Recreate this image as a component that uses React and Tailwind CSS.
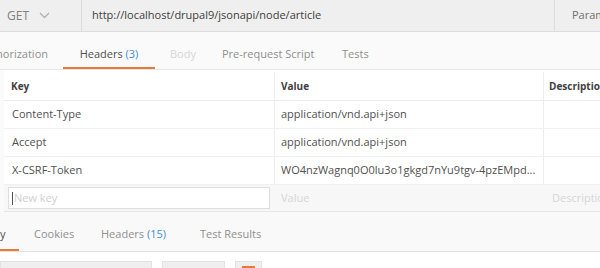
import React from 'react';

const rows = [
  { key: 'Content-Type', value: 'application/vnd.api+json' },
  { key: 'Accept', value: 'application/vnd.api+json' },
  { key: 'X-CSRF-Token', value: 'WO4nzWagnq0O0lu3o1gkgd7nYu9tgv-4pzEMpd...' },
];

const App = () => {
  return (
    <div
      className="w-[600px] h-[268px] overflow-hidden bg-[#fafafa] text-[11px] text-[#505050]"
      style={{ fontFamily: '"Open Sans", "Noto Sans", sans-serif' }}
    >
      {/* URL bar */}
      <div className="flex h-[32px] bg-[#efefef] border-b border-[#dcdcdc]">
        <div className="w-[82px] flex items-center gap-[10px] pl-[7px] border-r border-[#dcdcdc] text-[12px] text-[#808080]">
          <span>GET</span>
          <svg width="11" height="7" viewBox="0 0 11 7" fill="none" stroke="#b0b0b0" strokeWidth="1.3">
            <path d="M1 1l4.5 4.5L10 1" />
          </svg>
        </div>
        <div className="flex-1 flex items-center pl-[10px] text-[11px] text-[#404040] border-r border-[#dcdcdc]">
          http://localhost/drupal9/jsonapi/node/article
        </div>
        <div className="w-[45px] flex items-center pl-[17px] text-[11px] text-[#707070] whitespace-nowrap">
          Params
        </div>
      </div>

      {/* Request tabs */}
      <div className="flex h-[38px] border-b border-[#e6e6e6] text-[11px] whitespace-nowrap">
        <div className="w-[63px] pt-[14px] pr-[15px] flex justify-end text-[#909090] overflow-hidden">horization</div>
        <div className="w-[92px] pt-[14px] flex justify-center border-b-2 border-[#e8793a] text-[#505050]">
          <span>Headers <span className="text-[#3d8fd1]">(3)</span></span>
        </div>
        <div className="w-[52px] pt-[14px] pl-[15px] text-[#d6d6d6]">Body</div>
        <div className="w-[120px] pt-[14px] pl-[15px] text-[#909090]">Pre-request Script</div>
        <div className="pt-[14px] pl-[15px] text-[#909090]">Tests</div>
      </div>

      {/* Headers table */}
      <div className="ml-[4px] bg-white">
        <div className="grid grid-cols-[271px_269px_1fr] h-[31px] pt-[2px] border-b border-[#ececec] text-[10px] font-bold text-[#404040]">
          <div className="flex items-center pl-[7px] border-r border-[#ececec]">Key</div>
          <div className="flex items-center pl-[6px] border-r border-[#ececec]">Value</div>
          <div className="flex items-center pl-[5px] whitespace-nowrap">Description</div>
        </div>
        {rows.map((r) => (
          <div key={r.key} className="grid grid-cols-[271px_269px_1fr] h-[28px] border-b border-[#f0f0f0]">
            <div className="flex items-center pl-[8px] border-r border-[#ececec]">{r.key}</div>
            <div className="flex items-center pl-[6px] border-r border-[#ececec] whitespace-nowrap overflow-hidden">{r.value}</div>
            <div />
          </div>
        ))}
        <div className="grid grid-cols-[271px_269px_1fr] h-[27px] bg-[#f7f7f7] border-b border-[#e6e6e6]">
          <div className="flex items-center pl-[4px] pr-[5px]">
            <div className="w-full h-[22px] bg-white border border-[#dedede] flex items-center pl-[3px] text-[#cfcfcf]">
              <span className="w-px h-[13px] bg-[#505050] mr-[1px]" />
              New key
            </div>
          </div>
          <div className="flex items-center pl-[6px] text-[#d6d6d6]">Value</div>
          <div className="flex items-center pl-[8px] text-[#d6d6d6] whitespace-nowrap">Description</div>
        </div>
      </div>

      {/* Response tabs */}
      <div className="flex items-end h-[40px] bg-[#f9f9f9] border-b border-[#e2e2e2] text-[11px] text-[#909090] whitespace-nowrap">
        <div className="w-[19px] h-[25px] border-b-2 border-[#e8793a] text-[#505050]">y</div>
        <div className="w-[67px] h-[25px] pl-[15px]">Cookies</div>
        <div className="w-[99px] h-[25px] pl-[15px]">Headers <span className="text-[#3d8fd1]">(15)</span></div>
        <div className="h-[25px] pl-[15px]">Test Results</div>
      </div>

      {/* Response toolbar */}
      <div className="flex items-start gap-[10px] pt-[9px] bg-white h-[20px]">
        <div className="w-[152px] h-[20px] bg-[#efefef] border border-[#e2e2e2]" />
        <div className="w-[63px] h-[20px] bg-[#efefef] border border-[#e2e2e2]" />
        <div className="w-[27px] h-[20px] bg-[#efefef] border border-[#e2e2e2] flex justify-center pt-[4px]">
          <div className="w-[13px] h-[3px] bg-[#e8793a]" />
        </div>
      </div>
    </div>
  );
};

export default App;
